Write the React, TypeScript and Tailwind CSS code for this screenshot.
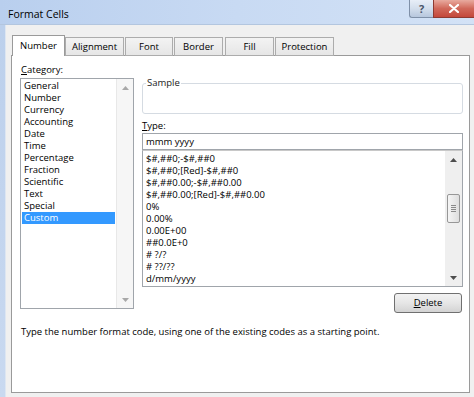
import React from "react";

const categories = [
  "General",
  "Number",
  "Currency",
  "Accounting",
  "Date",
  "Time",
  "Percentage",
  "Fraction",
  "Scientific",
  "Text",
  "Special",
  "Custom",
];

const formats = [
  "$#,##0;-$#,##0",
  "$#,##0;[Red]-$#,##0",
  "$#,##0.00;-$#,##0.00",
  "$#,##0.00;[Red]-$#,##0.00",
  "0%",
  "0.00%",
  "0.00E+00",
  "##0.0E+0",
  "# ?/?",
  "# ??/??",
  "d/mm/yyyy",
];

const tabs = [
  { label: "Number", w: "w-[53px]", ml: "ml-0" },
  { label: "Alignment", w: "w-[59px]", ml: "ml-0" },
  { label: "Font", w: "w-[48px]", ml: "ml-[1px]" },
  { label: "Border", w: "w-[49px]", ml: "ml-[1px]" },
  { label: "Fill", w: "w-[49px]", ml: "ml-[2px]" },
  { label: "Protection", w: "w-[59px]", ml: "ml-[1px]" },
];

function Arrow({ up, dark }: { up: boolean; dark: boolean }) {
  return (
    <svg width="7" height="4" viewBox="0 0 7 4">
      <polygon
        points={up ? "0,4 3.5,0 7,4" : "0,0 3.5,4 7,0"}
        fill={dark ? "#4d4d4d" : "#a8a8a8"}
      />
    </svg>
  );
}

export default function App() {
  return (
    <div className="w-[474px] h-[397px] bg-[#f0f0f0] flex flex-col overflow-hidden font-['Segoe_UI','Open_Sans',sans-serif] text-[9.5px] leading-[12px] text-black">
      {/* Title bar */}
      <div className="h-[25px] flex bg-gradient-to-r from-[#b9cfee] via-[#c8daf3] to-[#d3e2f6] border-b border-[#b3c6df]">
        <div className="pl-[8px] pt-[7px] text-[10.5px] leading-[14px] text-black">Format Cells</div>
        <div className="ml-auto flex items-start">
          <div className="w-[24px] h-[18px] rounded-bl-[3px] border border-t-0 border-r-0 border-[#7f90a8] bg-gradient-to-b from-[#e8eef7] via-[#d3deec] to-[#b7c7dd] flex items-center justify-center text-[11px] leading-none text-[#4a5568] font-bold">
            ?
          </div>
          <div className="w-[41px] h-[18px] border-l border-b border-[#8e3a31] bg-gradient-to-b from-[#e8aa9f] via-[#d0685a] to-[#c4473a] flex items-center justify-center">
            <svg width="10" height="9" viewBox="0 0 10 9">
              <path d="M1 1 L9 8 M9 1 L1 8" stroke="#ffffff" strokeWidth="2.2" strokeLinecap="round" />
            </svg>
          </div>
        </div>
      </div>

      <div className="flex flex-1 min-h-0">
        {/* left frame */}
        <div className="w-[6px] bg-gradient-to-b from-[#bcd0ec] to-[#c9d9f0] border-r border-[#dde6f2]" />
        <div className="flex-1 flex flex-col pl-[5px] pr-[4px] pt-[10px] pb-[4px]">
          {/* Tabs */}
          <div className="flex items-end pl-[1px] -mb-px relative z-10">
            {tabs.map((t, i) =>
              i === 0 ? (
                <div
                  key={t.label}
                  className={`${t.w} h-[21px] bg-white border border-b-0 border-[#9a9a9a] flex items-center justify-center pb-[1px]`}
                >
                  {t.label}
                </div>
              ) : (
                <div
                  key={t.label}
                  className={`${t.w} ${t.ml} h-[19px] bg-gradient-to-b from-[#f3f3f3] to-[#e6e6e6] border border-[#acacac] flex items-center justify-center`}
                >
                  {t.label}
                </div>
              )
            )}
          </div>

          {/* Panel */}
          <div className="flex-1 bg-white border border-[#9a9a9a] flex flex-col pl-[8px] pr-[4px] pt-[8px]">
            <div className="flex gap-[8px]">
              {/* Left column */}
              <div className="w-[114px] flex flex-col">
                <div className="ml-px h-[12px]">
                  <span className="underline">C</span>ategory:
                </div>
                <div className="mt-[2px] h-[231px] border border-[#a0a5ab] flex">
                  <div className="flex-1 p-[1px] flex flex-col">
                    {categories.map((c) => (
                      <div
                        key={c}
                        className={`h-[12px] px-[2px] whitespace-nowrap ${
                          c === "Custom" ? "bg-[#3399ff] text-white" : ""
                        }`}
                      >
                        {c}
                      </div>
                    ))}
                  </div>
                  <div className="w-[17px] bg-[#f6f6f6] border-l border-[#e8e8e8] flex flex-col">
                    <div className="h-[17px] flex items-center justify-center">
                      <Arrow up dark={false} />
                    </div>
                    <div className="flex-1" />
                    <div className="h-[17px] flex items-center justify-center">
                      <Arrow up={false} dark={false} />
                    </div>
                  </div>
                </div>
              </div>

              {/* Right column */}
              <div className="w-[321px] flex flex-col">
                <fieldset className="mt-[13px] h-[37px] border border-[#d5dbe2] rounded-[3px] px-[3px]">
                  <legend className="px-[1px] text-[#222] leading-[12px]">Sample</legend>
                </fieldset>
                <div className="mt-[6px] h-[12px]">
                  <span className="underline">T</span>ype:
                </div>
                <div className="mt-[1px] h-[17px] border border-[#a0a5ab] px-[3px] flex items-center">
                  mmm yyyy
                </div>
                <div className="h-[137px] border border-[#a0a5ab] border-t-[#c8c8c8] flex">
                  <div className="flex-1 pt-[2px] pl-[3px] flex flex-col">
                    {formats.map((f) => (
                      <div key={f} className="h-[12px] whitespace-nowrap">
                        {f}
                      </div>
                    ))}
                  </div>
                  <div className="w-[17px] bg-[#efefef] flex flex-col">
                    <div className="h-[17px] flex items-center justify-center">
                      <Arrow up dark />
                    </div>
                    <div className="flex-1 pt-[26px] flex flex-col items-center">
                      <div className="w-[13px] h-[29px] rounded-[2px] border border-[#979797] bg-gradient-to-r from-[#f5f5f5] to-[#dedede] flex flex-col items-center justify-center gap-[1px]">
                        <div className="w-[5px] h-px bg-[#8a8a8a]" />
                        <div className="w-[5px] h-px bg-[#8a8a8a]" />
                        <div className="w-[5px] h-px bg-[#8a8a8a]" />
                        <div className="w-[5px] h-px bg-[#8a8a8a]" />
                      </div>
                    </div>
                    <div className="h-[17px] flex items-center justify-center">
                      <Arrow up={false} dark />
                    </div>
                  </div>
                </div>
                <div className="mt-[6px] self-end mr-px w-[68px] h-[20px] rounded-[3px] border border-[#707070] bg-gradient-to-b from-[#f2f2f2] via-[#e6e6e6] to-[#d3d3d3] flex items-center justify-center">
                  <span>
                    <span className="underline">D</span>elete
                  </span>
                </div>
              </div>
            </div>

            <div className="mt-[13px] ml-px h-[12px] whitespace-nowrap">
              Type the number format code, using one of the existing codes as a starting point.
            </div>
          </div>
        </div>
      </div>
    </div>
  );
}
